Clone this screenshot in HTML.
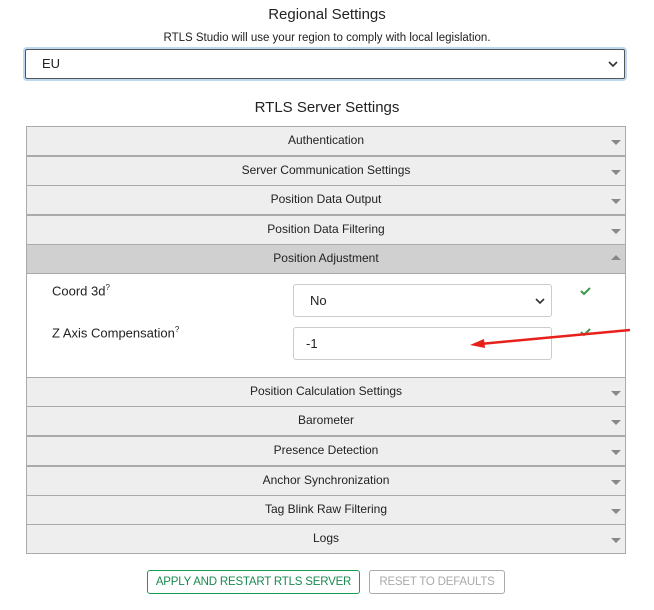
<!DOCTYPE html>
<html><head><style>
body{margin:0;width:654px;height:610px;background:#fff;font-family:"Liberation Sans",sans-serif;color:#222;position:relative;overflow:hidden}
.a{position:absolute}
.h{position:absolute;left:26px;width:598px;height:28px;border:1px solid #aaa;background:#eee;font-size:12px;text-align:center;line-height:26px;color:#222}
.h:after{content:"";position:absolute;right:4px;top:13px;border-left:5px solid transparent;border-right:5px solid transparent;border-top:5px solid #888}
.h.o{background:#d0d0d0}
.h.o:after{border-top:none;border-bottom:5px solid #888;top:10px}
</style></head><body>
<div class="a" style="left:0;width:654px;top:6px;text-align:center;font-size:15px">Regional Settings</div>
<div class="a" style="left:0;width:654px;top:32px;text-align:center;font-size:11.5px">RTLS Studio will use your region to comply with local legislation.</div>
<div class="a" style="left:25px;top:49px;width:598px;height:28px;border:1px solid #555;box-shadow:0 0 0 2px #bcd8f5;border-radius:2px;font-size:13px;line-height:28px;text-indent:16px">EU<svg style="position:absolute;right:6px;top:10px" width="10" height="8" viewBox="0 0 10 8"><path d="M1 2l4 4 4-4" stroke="#333" stroke-width="1.6" fill="none"/></svg></div>
<div class="a" style="left:0;width:654px;top:99px;text-align:center;font-size:15px">RTLS Server Settings</div>
<div class="h" style="top:126px">Authentication</div>
<div class="h" style="top:156px">Server Communication Settings</div>
<div class="h" style="top:185px">Position Data Output</div>
<div class="h" style="top:215px">Position Data Filtering</div>
<div class="h o" style="top:244px">Position Adjustment</div>
<div class="a" style="left:26px;top:273px;width:598px;height:104px;border-left:1px solid #aaa;border-right:1px solid #aaa"></div>
<div class="a" style="left:52px;top:283px;font-size:13px">Coord 3d<sup style="font-size:8px">?</sup></div>
<div class="a" style="left:52px;top:325px;font-size:13px">Z Axis Compensation<sup style="font-size:8px">?</sup></div>
<div class="a" style="left:293px;top:284px;width:257px;height:31px;border:1px solid #ccc;border-radius:3px;font-size:13px;line-height:31px;text-indent:16px">No<svg style="position:absolute;right:6px;top:12px" width="10" height="8" viewBox="0 0 10 8"><path d="M1 2l4 4 4-4" stroke="#333" stroke-width="1.6" fill="none"/></svg></div>
<div class="a" style="left:293px;top:327px;width:257px;height:31px;border:1px solid #ccc;border-radius:3px;font-size:13px;line-height:31px;text-indent:12px">-1</div>
<svg class="a" style="left:578px;top:285px" width="16" height="12"><path d="M3 6l3 3 6-6" stroke="#3a9a4a" stroke-width="2" fill="none"/></svg>
<svg class="a" style="left:578px;top:326px" width="16" height="12"><path d="M3 6l3 3 6-6" stroke="#3a9a4a" stroke-width="2" fill="none"/></svg>
<svg class="a" style="left:460px;top:320px" width="180" height="35"><path d="M170 10L20 24" stroke="#e8201c" stroke-width="2.5"/><path d="M10 25l14-6 1 9z" fill="#e8201c"/></svg>
<div class="h" style="top:377px">Position Calculation Settings</div>
<div class="h" style="top:406px">Barometer</div>
<div class="h" style="top:436px">Presence Detection</div>
<div class="h" style="top:466px">Anchor Synchronization</div>
<div class="h" style="top:495px">Tag Blink Raw Filtering</div>
<div class="h" style="top:524px">Logs</div>
<div class="a" style="left:147px;top:570px;width:211px;height:22px;border:1px solid #1a9a50;border-radius:3px;color:#1a8a50;font-size:11.5px;letter-spacing:-0.2px;line-height:22px;text-align:center">APPLY AND RESTART RTLS SERVER</div>
<div class="a" style="left:369px;top:570px;width:134px;height:22px;border:1px solid #aaa;border-radius:3px;color:#aaa;font-size:11.5px;letter-spacing:-0.2px;line-height:22px;text-align:center">RESET TO DEFAULTS</div>
</body></html>
